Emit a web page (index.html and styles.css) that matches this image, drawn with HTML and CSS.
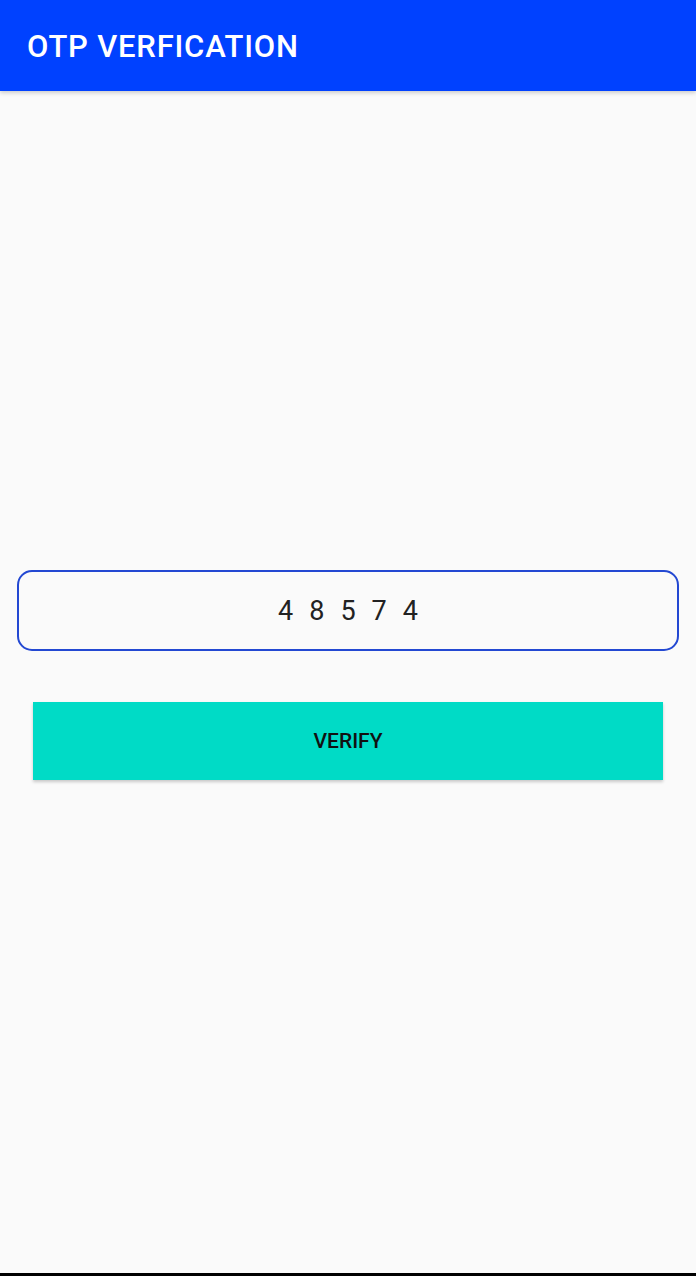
FILE: index.html
```html
<!DOCTYPE html>
<html>
<head>
<meta charset="utf-8">
<link rel="stylesheet" href="styles.css">
</head>
<body>
<div class="screen">
  <header class="appbar"><h1 class="title">OTP VERFICATION</h1></header>
  <main class="content">
    <div class="otp-field"><span class="otp-text">48574</span></div>
    <button class="verify-btn">VERIFY</button>
  </main>
  <div class="navline"></div>
</div>
</body>
</html>
```
FILE: styles.css
```css
html, body {
  margin: 0;
  padding: 0;
  background: #fafafa;
}
.screen {
  width: 696px;
  height: 1276px;
  display: flex;
  flex-direction: column;
  background: #fafafa;
  font-family: Roboto, "Noto Sans", sans-serif;
  overflow: hidden;
}
.appbar {
  height: 91px;
  flex: 0 0 91px;
  background: #0041ff;
  display: flex;
  align-items: center;
  padding-left: 27px;
  box-shadow: 0 2px 4px rgba(0,0,0,0.18);
  position: relative;
  z-index: 1;
}
.title {
  margin: 0;
  color: #ffffff;
  font-size: 31px;
  font-weight: 500;
  letter-spacing: 0.8px;
  padding-top: 2px;
}
.content {
  flex: 1;
  display: flex;
  flex-direction: column;
  padding-top: 479px;
}
.otp-field {
  margin: 0 17px;
  height: 81px;
  box-sizing: border-box;
  border: 2px solid #2348d2;
  border-radius: 15px;
  display: flex;
  align-items: center;
  justify-content: center;
}
.otp-text {
  font-size: 27px;
  color: #222222;
  letter-spacing: 16px;
  margin-right: -16px;
}
.verify-btn {
  margin: 51px 33px 0 33px;
  height: 78px;
  border: none;
  border-radius: 0;
  background: #00dbc6;
  box-shadow: 0 2px 3px rgba(0,0,0,0.2);
  font-family: Roboto, "Noto Sans", sans-serif;
  font-size: 21px;
  font-weight: 500;
  color: #111111;
  padding: 0;
}
.navline {
  height: 3px;
  flex: 0 0 3px;
  background: #000000;
}
```
